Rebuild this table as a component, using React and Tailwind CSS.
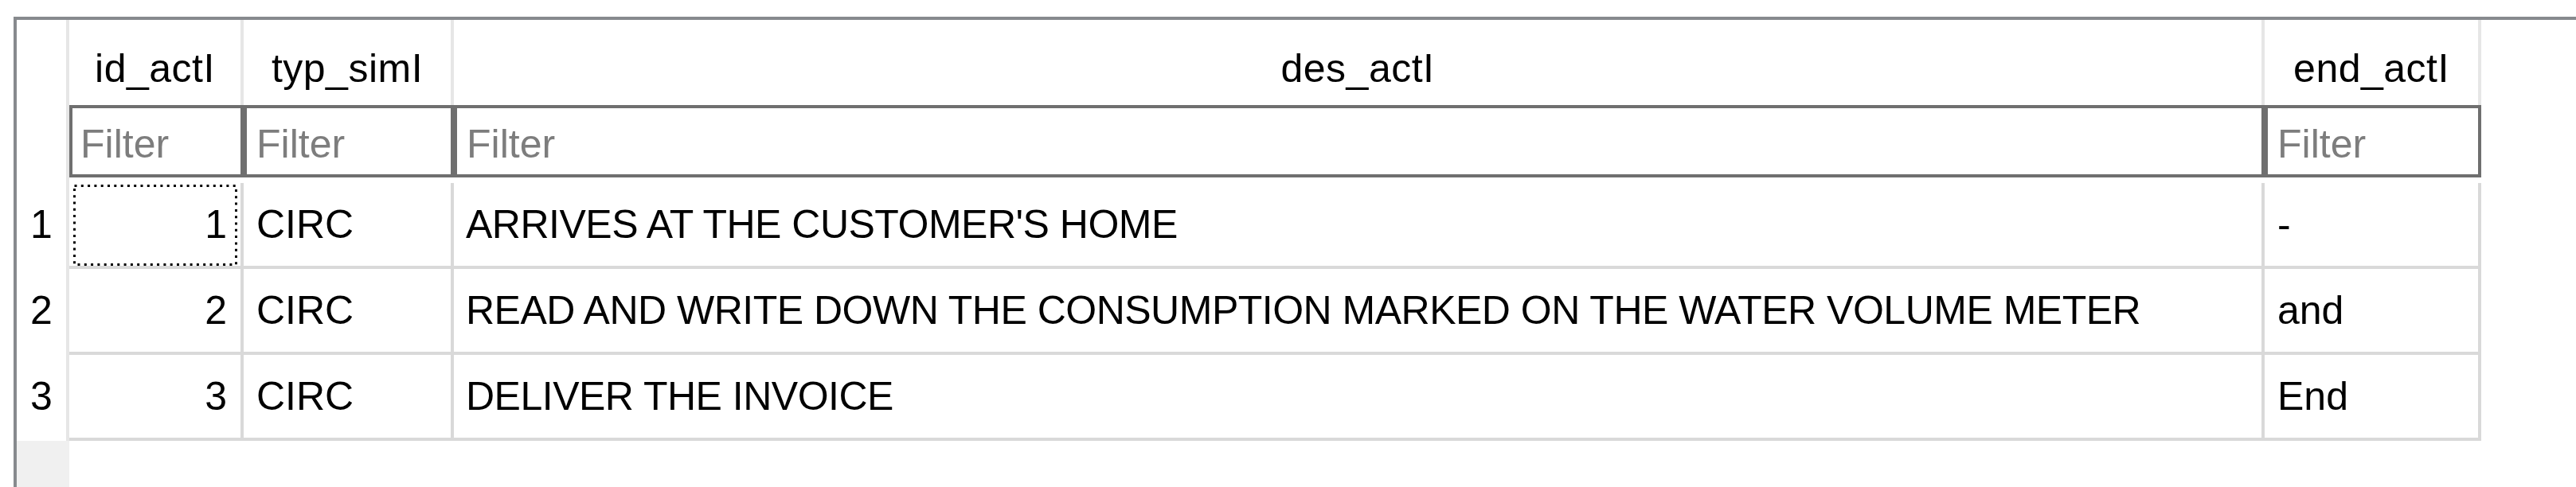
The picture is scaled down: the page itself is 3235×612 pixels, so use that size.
import React from "react";

const font = { fontFamily: '"Liberation Sans", Arial, sans-serif' };

const rows = [
  { n: "1", id: "1", typ: "CIRC", des: "ARRIVES AT THE CUSTOMER'S HOME", end: "-" },
  { n: "2", id: "2", typ: "CIRC", des: "READ AND WRITE DOWN THE CONSUMPTION MARKED ON THE WATER VOLUME METER", end: "and" },
  { n: "3", id: "3", typ: "CIRC", des: "DELIVER THE INVOICE", end: "End" },
];

function FocusRect() {
  return (
    <svg className="absolute left-[5px] top-[2px] pointer-events-none" width="206" height="102" viewBox="0 0 206 102">
      <rect x="1.5" y="1.5" width="203" height="99" fill="none" stroke="#000" strokeWidth="3" strokeDasharray="3 5.3" />
    </svg>
  );
}

export default function App() {
  return (
    <div className="w-[3235px] h-[612px] bg-white pt-[21px] pl-[17px] overflow-hidden text-[50px] text-black leading-none" style={font}>
      <div className="h-[591px] border-t-4 border-l-4 border-[#878a8e] flex flex-col">
        {/* Header row */}
        <div className="flex h-[107px] shrink-0">
          <div className="w-[66px] border-r-4 border-[#e6e6e6]" />
          <div className="w-[219px] border-r-4 border-[#e6e6e6] flex items-center justify-center pt-[14px] tracking-[0.5px]">id_actI</div>
          <div className="w-[264px] border-r-4 border-[#e6e6e6] flex items-center justify-center pt-[14px] tracking-[0.5px]">typ_simI</div>
          <div className="w-[2274px] border-r-4 border-[#e6e6e6] flex items-center justify-center pt-[14px] tracking-[0.5px]">des_actI</div>
          <div className="w-[272px] border-r-4 border-[#e6e6e6] flex items-center justify-center pt-[14px] tracking-[0.5px]">end_actI</div>
        </div>
        {/* Filter row */}
        <div className="flex h-[91px] shrink-0">
          <div className="w-[66px] border-r-4 border-[#e6e6e6]" />
          <div className="w-[219px] border-4 border-[#6f6f6f] flex items-center pl-[10px] pt-[6px] text-[#7d7d7d]">Filter</div>
          <div className="w-[264px] border-4 border-[#6f6f6f] flex items-center pl-[12px] pt-[6px] text-[#7d7d7d]">Filter</div>
          <div className="w-[2274px] border-4 border-[#6f6f6f] flex items-center pl-[12px] pt-[6px] text-[#7d7d7d]">Filter</div>
          <div className="w-[272px] border-4 border-[#6f6f6f] flex items-center pl-[12px] pt-[6px] text-[#7d7d7d]">Filter</div>
        </div>
        {/* spacer */}
        <div className="flex h-[7px] shrink-0">
          <div className="w-[66px] border-r-4 border-[#e6e6e6]" />
        </div>
        {/* Data rows */}
        {rows.map((r, i) => (
          <div key={r.n} className="flex h-[108px] shrink-0">
            <div className="w-[66px] border-r-4 border-[#e6e6e6] flex items-center justify-center pb-[4px]">{r.n}</div>
            <div className="relative w-[219px] border-r-4 border-b-4 border-[#d9d9d9] flex items-center justify-end pr-[17px]">
              {i === 0 && <FocusRect />}
              {r.id}
            </div>
            <div className="w-[264px] border-r-4 border-b-4 border-[#d9d9d9] flex items-center pl-[16px]">{r.typ}</div>
            <div className="w-[2274px] border-r-4 border-b-4 border-[#d9d9d9] flex items-center pl-[15px] whitespace-nowrap tracking-[-0.5px]">{r.des}</div>
            <div className="w-[272px] border-r-4 border-b-4 border-[#d9d9d9] flex items-center pl-[16px]">{r.end}</div>
          </div>
        ))}
        {/* Filler */}
        <div className="flex flex-1">
          <div className="w-[66px] bg-[#f0f0f0]" />
        </div>
      </div>
    </div>
  );
}
